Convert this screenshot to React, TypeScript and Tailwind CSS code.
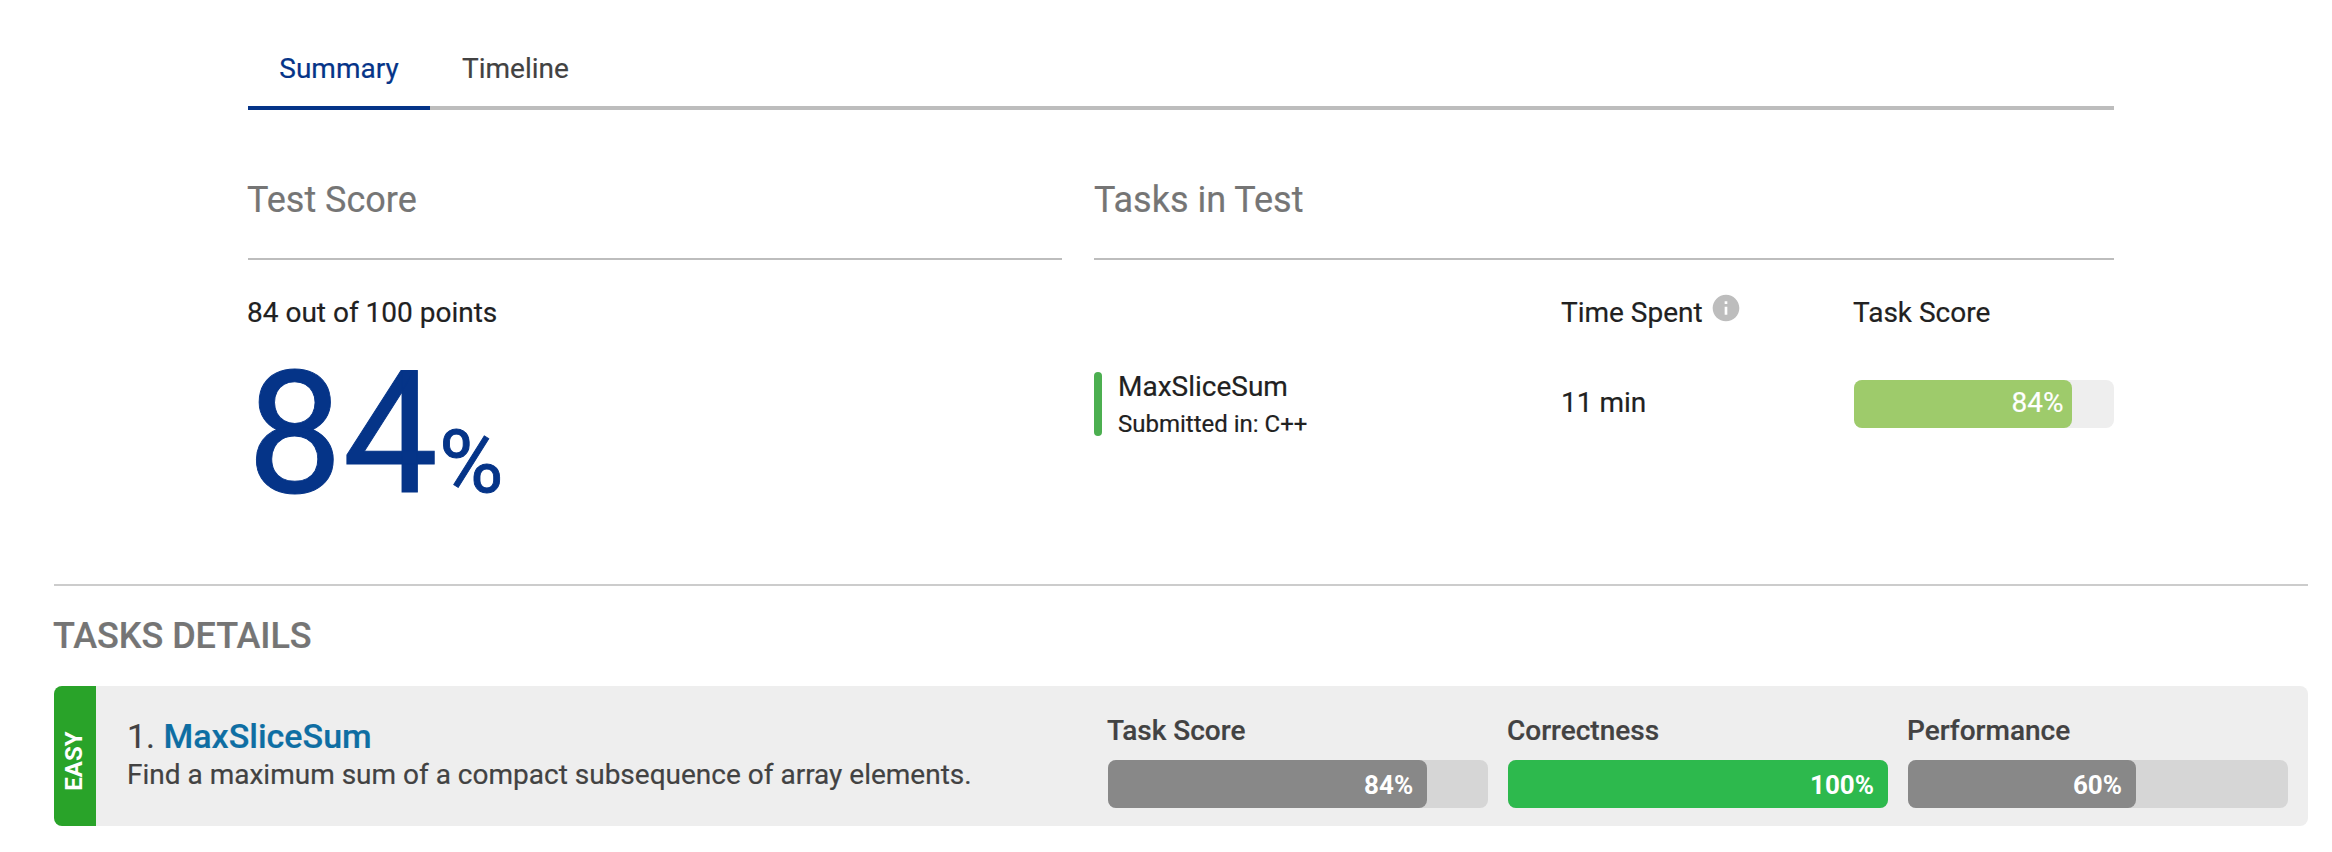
import { type FC } from 'react';

interface ScoreBarProps {
  label: string;
  value: number;
  color: string;
}

const taskScores: ScoreBarProps[] = [
  { label: 'Task Score', value: 84, color: 'bg-[#888888]' },
  { label: 'Correctness', value: 100, color: 'bg-[#2db94d]' },
  { label: 'Performance', value: 60, color: 'bg-[#888888]' },
];

const InfoIcon: FC = () => (
  <svg viewBox="0 0 24 24" className="w-8 h-8 -mt-[10px] ml-[7px]" fill="#bdbdbd">
    <path d="M12 2C6.48 2 2 6.48 2 12s4.48 10 10 10 10-4.48 10-10S17.52 2 12 2zm1 15h-2v-6h2v6zm0-8h-2V7h2v2z" />
  </svg>
);

const ScoreBar: FC<ScoreBarProps> = ({ label, value, color }) => (
  <div className="w-[380px]">
    <div className="-ml-px h-10 pt-px leading-10 text-[28px] font-medium">{label}</div>
    <div className="mt-[10px] h-12 rounded-lg bg-[#d6d6d6]">
      <div
        className={`h-12 rounded-lg pr-[14px] text-right text-[26px] leading-[50px] font-bold text-white [-webkit-text-stroke:0px] ${color}`}
        style={{ width: `${value}%` }}
      >
        {value}%
      </div>
    </div>
  </div>
);

const Tabs: FC = () => (
  <nav className="flex h-[110px] items-start border-b-4 border-[#bdbdbd] text-[28px] leading-9 text-[#424242]">
    <button className="h-[110px] w-[182px] border-b-4 border-[#053488] pt-[32px] text-[#053488]">Summary</button>
    <button className="h-[110px] px-8 pt-[28px]">Timeline</button>
  </nav>
);

const TestScore: FC = () => (
  <section className="w-[814px]">
    <h2 className="h-[150px] border-b-2 border-[#bdbdbd] pt-[66px] text-[36px] leading-[48px] text-[#757575]">
      <span className="-ml-px">Test Score</span>
    </h2>
    <p className="-ml-px pt-[33px] text-[28px] leading-10">84 out of 100 points</p>
    <div className="-ml-px mt-px h-[200px] leading-[200px] text-[#053488] [-webkit-text-stroke:0.9px]">
      <span className="text-[170px]">84</span>
      <span className="ml-px text-[88px]">%</span>
    </div>
  </section>
);

const TasksInTest: FC = () => (
  <section className="w-[1020px]">
    <h2 className="h-[150px] border-b-2 border-[#bdbdbd] pt-[66px] text-[36px] leading-[48px] text-[#757575]">
      Tasks in Test
    </h2>
    <div className="grid grid-cols-[467px_292px_261px] pt-[33px] text-[28px] leading-10">
      <span />
      <span className="flex items-center">
        Time Spent
        <InfoIcon />
      </span>
      <span>Task Score</span>
    </div>
    <div className="mt-[39px] grid grid-cols-[467px_293px_260px] text-[28px]">
      <div className="flex">
        <div className="h-16 w-2 rounded bg-[#4caf50]" />
        <div className="pl-4 pt-px">
          <div className="text-[28px] leading-7">MaxSliceSum</div>
          <div className="mt-[7px] text-2xl leading-8">Submitted in: C++</div>
        </div>
      </div>
      <span className="pt-[11px] leading-10">11 min</span>
      <div className="mt-2 h-12 rounded-lg bg-[#eeeeee]">
        <div className="h-12 w-[84%] rounded-lg bg-[#9ecb6b] pr-[9px] text-right leading-[46px] text-white">84%</div>
      </div>
    </div>
  </section>
);

export default function App() {
  return (
    <main className="h-[852px] w-[2332px] overflow-hidden bg-white font-['Roboto',sans-serif] text-[#212121] [-webkit-text-stroke:0.2px]">
      <div className="ml-[248px] h-[584px] w-[1866px]">
        <Tabs />
        <div className="flex gap-8">
          <TestScore />
          <TasksInTest />
        </div>
      </div>

      <section className="ml-[54px] w-[2254px] border-t-2 border-[#cccccc] text-[#424242]">
        <h2 className="-ml-px h-[100px] pt-[26px] text-[36px] leading-[48px] font-medium tracking-[-0.05px] text-[#757575]">
          TASKS DETAILS
        </h2>
        <div className="flex h-[140px] overflow-hidden rounded-lg bg-[#eeeeee]">
          <div className="flex w-[42px] items-center justify-center bg-[#29a329] pt-[10px] pr-[3px] text-white">
            <span className="-rotate-90 text-2xl font-bold [-webkit-text-stroke:0px]">EASY</span>
          </div>
          <div className="flex-1 pl-[31px] pt-[28px]">
            <h3 className="text-[34px] leading-[44px]">
              1. <a className="font-medium text-[#0e6ea3]">MaxSliceSum</a>
            </h3>
            <p className="pt-px text-[28px] leading-8">
              Find a maximum sum of a compact subsequence of array elements.
            </p>
          </div>
          <div className="flex gap-5 pr-5 pt-6">
            {taskScores.map((s) => (
              <ScoreBar key={s.label} {...s} />
            ))}
          </div>
        </div>
      </section>
    </main>
  );
}
